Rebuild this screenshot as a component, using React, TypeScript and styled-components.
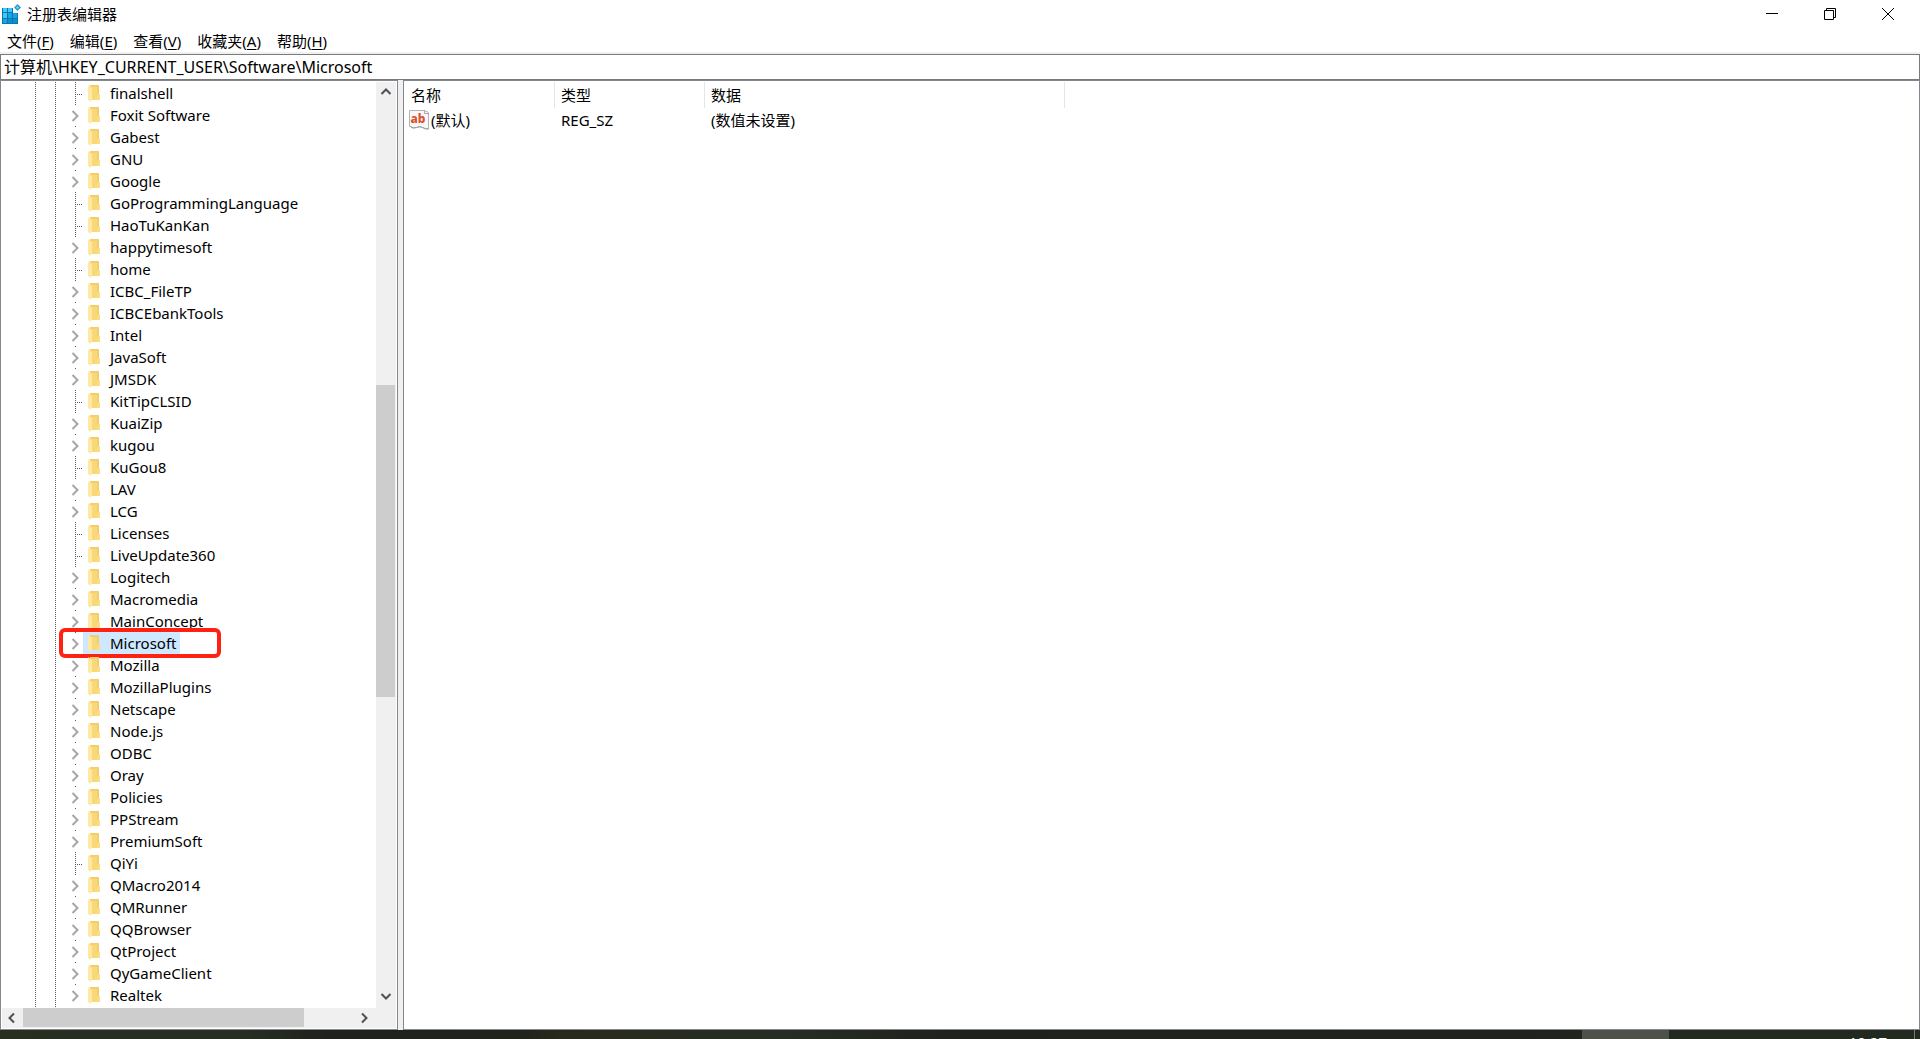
import React from "react";
import styled, { createGlobalStyle } from "styled-components";

const Global = createGlobalStyle`
  *, *::before, *::after { box-sizing: border-box; }
  html, body { margin: 0; height: 100%; background: #ffffff; overflow: hidden; }
  #root { height: 100%; }
  body, button, input, table {
    font-family: "Noto Sans", "Noto Sans CJK SC", sans-serif;
    font-size: 15px;
    line-height: 22px;
    color: #000000;
  }
  button { border: 0; padding: 0; margin: 0; background: transparent; cursor: default; }
`;

const Screen = styled.div`
  display: flex;
  flex-direction: column;
  height: 100vh;
`;

const Window = styled.main`
  display: flex;
  flex-direction: column;
  flex: 1;
  min-height: 0;
  background: #ffffff;
`;

const TitleBar = styled.header`
  display: flex;
  align-items: center;
  justify-content: space-between;
  height: 30px;
  padding: 0 3px 2px 2px;
`;

const TitleText = styled.h1`
  display: flex;
  align-items: center;
  gap: 5px;
  margin: 0;
  font-size: 15px;
  font-weight: 400;
`;

const Controls = styled.div`
  display: flex;
  height: 100%;
`;

const ControlButton = styled.button`
  display: flex;
  align-items: center;
  justify-content: center;
  width: 58px;
`;

const MenuBar = styled.nav`
  display: flex;
  gap: 16px;
  height: 22px;
  padding: 0 7px;
`;

const MenuButton = styled.button`
  display: flex;
  align-items: center;

  u { text-underline-offset: 2px; }
`;

const AddressBar = styled.div`
  border-top: 2px solid #f0f0f0;

  input {
    display: block;
    width: 100%;
    height: 26px;
    padding: 0 3px 2px;
    border: 1px solid #7a7a7a;
    border-radius: 0;
    outline: none;
    font-size: 16px;
  }
`;

const Body = styled.div`
  display: grid;
  grid-template-columns: 398px 5px minmax(0, 1fr);
  flex: 1;
  min-height: 0;
  background: #f0f0f0;
`;

const Pane = styled.section`
  min-width: 0;
  min-height: 0;
  padding: 1px;
  border: 1px solid #828790;
  background: #ffffff;
`;

const TreePane = styled(Pane)`
  display: grid;
  grid-template-columns: minmax(0, 1fr) 20px;
  grid-template-rows: minmax(0, 1fr) 20px;
`;

const Tree = styled.ul`
  margin: 0;
  padding: 0 0 0 33px;
  list-style: none;
  overflow: hidden;
  background: repeating-linear-gradient(#5a5a5a 0 1px, transparent 1px 2px) 33px 0 / 1px 100% no-repeat,
    repeating-linear-gradient(#5a5a5a 0 1px, transparent 1px 2px) 53px 0 / 1px 100% no-repeat;
`;

const TreeRow = styled.li`
  position: relative;
  display: flex;
  height: 22px;
  padding-left: 36px;
`;

const Branch = styled.span<{ $leaf: boolean }>`
  display: flex;
  align-items: center;
  width: 12px;
  padding-top: 2px;
  background: ${(p) =>
    p.$leaf
      ? `repeating-linear-gradient(#5a5a5a 0 1px, transparent 1px 2px) 4px 0 / 1px 100% no-repeat,
         repeating-linear-gradient(90deg, #5a5a5a 0 1px, transparent 1px 2px) 4px 12px / 9px 1px no-repeat`
      : `linear-gradient(#5a5a5a, #5a5a5a) 4px 0 / 1px 1px no-repeat`};
`;

const Expander = styled.button`
  display: flex;
`;

const Entry = styled.span<{ $selected: boolean }>`
  display: flex;
  align-items: center;
  gap: 9px;
  padding: 0 4px;
  background: ${(p) => (p.$selected ? "#cde8ff" : "transparent")};
`;

const Highlight = styled.span`
  position: absolute;
  top: -4px;
  left: 24px;
  width: 162px;
  height: 30px;
  border: 4px solid #ff2213;
  border-radius: 6px;
`;

const Scroll = styled.div<{ $vertical?: boolean }>`
  display: flex;
  flex-direction: ${(p) => (p.$vertical ? "column" : "row")};
  background: #f0f0f0;
`;

const ScrollButton = styled.button<{ $size: number }>`
  display: flex;
  align-items: center;
  justify-content: center;
  flex: 0 0 ${(p) => p.$size}px;
`;

const Track = styled.div<{ $vertical?: boolean }>`
  display: flex;
  flex-direction: ${(p) => (p.$vertical ? "column" : "row")};
  flex: 1;
  padding: ${(p) => (p.$vertical ? "0 1px 0 0" : "0 0 1px 1px")};
`;

const Spacer = styled.div<{ $grow: number }>`
  flex: ${(p) => p.$grow} 0 0;
`;

const Thumb = styled.div<{ $grow: number }>`
  flex: ${(p) => p.$grow} 0 0;
  background: #cdcdcd;
`;

const Corner = styled.div`
  background: #f0f0f0;
`;

const Values = styled.table`
  width: 660px;
  table-layout: fixed;
  border-collapse: separate;
  border-spacing: 0;

  th, td {
    padding: 0 6px;
    text-align: left;
    font-weight: 400;
    white-space: nowrap;
  }
  th { height: 26px; border-right: 1px solid #e5e5e5; }
  td { height: 24px; }
  td:first-child { padding-left: 4px; }
`;

const NameColumn = styled.col`
  width: 150px;
`;

const DataColumn = styled.col`
  width: 360px;
`;

const ValueName = styled.span`
  display: flex;
  align-items: center;
  gap: 2px;
`;

const TaskBar = styled.footer`
  display: flex;
  justify-content: flex-end;
  height: 9px;
  overflow: hidden;
  background: linear-gradient(90deg, #282e20 0, #262d22 13%, #1f211d 17%, #20221c 27%, #28291c 29%, #272d21 38%, #262d24 41%, #1f211c 50%, #20221d 80%, #222a1f 88%);
`;

const TaskItem = styled.div`
  width: 87px;
  background: #4d5149;
`;

const Tray = styled.div`
  display: flex;
  justify-content: flex-end;
  width: 246px;
  border-right: 1px solid #777b73;
  padding-right: 27px;
`;

const Clock = styled.time`
  padding-top: 4px;
  line-height: 16px;
  color: #ffffff;
`;

const Edge = styled.div`
  width: 5px;
`;

const AppIcon = () => (
  <svg width="20" height="20" viewBox="0 0 20 20" aria-hidden="true">
    <path d="M0 4h11v5h5v11H0z" fill="#0a77b5" />
    <path d="M1 4h4v4H1zM6 4h4v4H6zM1 9h4v5H1z" fill="#3fc8f8" />
    <path d="M6 9h4v5H6zM11 9h4v5h-4zM1 15h4v4H1z" fill="#19a6e0" />
    <path d="M6 15h4v4H6zM11 15h4v4h-4z" fill="#0c91cf" />
    <path d="M15.500 0 19 3.500 15.500 7 12 3.500z" fill="#2b9fcf" />
    <path d="m15.500 2 1.500 1.500L15.500 5 14 3.500z" fill="#76d5f5" />
  </svg>
);

const Folder = () => (
  <svg width="14" height="18" viewBox="0 0 14 18" aria-hidden="true">
    <path d="M3 1h9v9l1 1v5H3z" fill="#f3cf6b" />
    <path d="M5 3h5v13H5z" fill="#f8d878" />
    <path d="M10 11l2-1 1 1v5h-3z" fill="#fbdc80" />
    <path d="M1 1l4 3v12H4v2l-3-2z" fill="#ffe9a2" />
  </svg>
);

const StringIcon = () => (
  <svg width="20" height="20" viewBox="0 0 20 20" aria-hidden="true">
    <path d="M.5.5h15l4 2v16.500q-4 .5-6-1.500t-6 0-7-1.500z" fill="#f8f8f8" stroke="#b4b4b4" />
    <path d="M15.500.5v3h4" fill="none" stroke="#a9a9a9" />
    <path d="M.5 16q4 3 7 1.500t6 0 6 1.500" fill="none" stroke="#9a9a9a" />
    <text x="9" y="13" textAnchor="middle" fontFamily="Noto Sans, sans-serif" fontSize="12" fontWeight="800" fill="#dc5130">ab</text>
  </svg>
);

const turns = { right: 0, down: 90, left: 180, up: 270 };

const Chevron = ({ dir }: { dir: keyof typeof turns }) => (
  <svg width="12" height="12" viewBox="0 0 12 12" aria-hidden="true">
    <path
      d="M4 1.500 8.500 6 4 10.500"
      fill="none"
      stroke="#505050"
      strokeWidth="2"
      transform={`rotate(${turns[dir]} 6 6)`}
    />
  </svg>
);

const ExpandMark = () => (
  <svg width="9" height="12" viewBox="0 0 9 12" aria-hidden="true">
    <path d="M1.500 1 6.500 6l-5 5" fill="none" stroke="#a6a6a6" strokeWidth="2" />
  </svg>
);

const menus = [
  ["文件", "F"],
  ["编辑", "E"],
  ["查看", "V"],
  ["收藏夹", "A"],
  ["帮助", "H"],
];

const keys = [
  "finalshell", "Foxit Software", "Gabest", "GNU", "Google", "GoProgrammingLanguage",
  "HaoTuKanKan", "happytimesoft", "home", "ICBC_FileTP", "ICBCEbankTools", "Intel",
  "JavaSoft", "JMSDK", "KitTipCLSID", "KuaiZip", "kugou", "KuGou8", "LAV", "LCG",
  "Licenses", "LiveUpdate360", "Logitech", "Macromedia", "MainConcept", "Microsoft",
  "Mozilla", "MozillaPlugins", "Netscape", "Node.js", "ODBC", "Oray", "Policies",
  "PPStream", "PremiumSoft", "QiYi", "QMacro2014", "QMRunner", "QQBrowser",
  "QtProject", "QyGameClient", "Realtek",
];

const leaves = new Set([
  "finalshell", "GoProgrammingLanguage", "HaoTuKanKan", "home", "KitTipCLSID",
  "KuGou8", "Licenses", "LiveUpdate360", "QiYi",
]);

const selectedKey = "Microsoft";

export default function App() {
  return (
    <Screen>
      <Global />
      <Window>
        <TitleBar>
          <TitleText>
            <AppIcon />
            注册表编辑器
          </TitleText>
          <Controls>
            <ControlButton aria-label="最小化">
              <svg width="12" height="12"><path d="M0 5.500h12" stroke="#000" /></svg>
            </ControlButton>
            <ControlButton aria-label="还原">
              <svg width="12" height="12">
                <path d="M.5 2.500h9v9h-9zM2.500 2.500v-2h9v9h-2" fill="none" stroke="#000" />
              </svg>
            </ControlButton>
            <ControlButton aria-label="关闭">
              <svg width="12" height="12"><path d="M0 0l12 12M12 0L0 12" stroke="#000" /></svg>
            </ControlButton>
          </Controls>
        </TitleBar>
        <MenuBar>
          {menus.map(([label, key]) => (
            <MenuButton key={key}>
              <span>{label}(<u>{key}</u>)</span>
            </MenuButton>
          ))}
        </MenuBar>
        <AddressBar>
          <input aria-label="地址" defaultValue="计算机\HKEY_CURRENT_USER\Software\Microsoft" />
        </AddressBar>
        <Body>
          <TreePane>
            <Tree role="tree">
              {keys.map((name) => (
                <TreeRow key={name} role="treeitem" aria-selected={name === selectedKey}>
                  <Branch $leaf={leaves.has(name)}>
                    {!leaves.has(name) && (
                      <Expander aria-label={name}>
                        <ExpandMark />
                      </Expander>
                    )}
                  </Branch>
                  <Entry $selected={name === selectedKey}>
                    <Folder />
                    {name}
                  </Entry>
                  {name === selectedKey && <Highlight />}
                </TreeRow>
              ))}
            </Tree>
            <Scroll $vertical>
              <ScrollButton $size={20} aria-label="向上"><Chevron dir="up" /></ScrollButton>
              <Track $vertical>
                <Spacer $grow={283} />
                <Thumb $grow={312} />
                <Spacer $grow={287} />
              </Track>
              <ScrollButton $size={24} aria-label="向下"><Chevron dir="down" /></ScrollButton>
            </Scroll>
            <Scroll>
              <ScrollButton $size={20} aria-label="向左"><Chevron dir="left" /></ScrollButton>
              <Track>
                <Thumb $grow={281} />
                <Spacer $grow={48} />
              </Track>
              <ScrollButton $size={24} aria-label="向右"><Chevron dir="right" /></ScrollButton>
            </Scroll>
            <Corner />
          </TreePane>
          <div />
          <Pane>
            <Values>
              <colgroup>
                <NameColumn />
                <NameColumn />
                <DataColumn />
              </colgroup>
              <thead>
                <tr>
                  <th>名称</th>
                  <th>类型</th>
                  <th>数据</th>
                </tr>
              </thead>
              <tbody>
                <tr>
                  <td>
                    <ValueName>
                      <StringIcon />
                      (默认)
                    </ValueName>
                  </td>
                  <td>REG_SZ</td>
                  <td>(数值未设置)</td>
                </tr>
              </tbody>
            </Values>
          </Pane>
        </Body>
      </Window>
      <TaskBar>
        <TaskItem />
        <Tray>
          <Clock>10:27</Clock>
        </Tray>
        <Edge />
      </TaskBar>
    </Screen>
  );
}
